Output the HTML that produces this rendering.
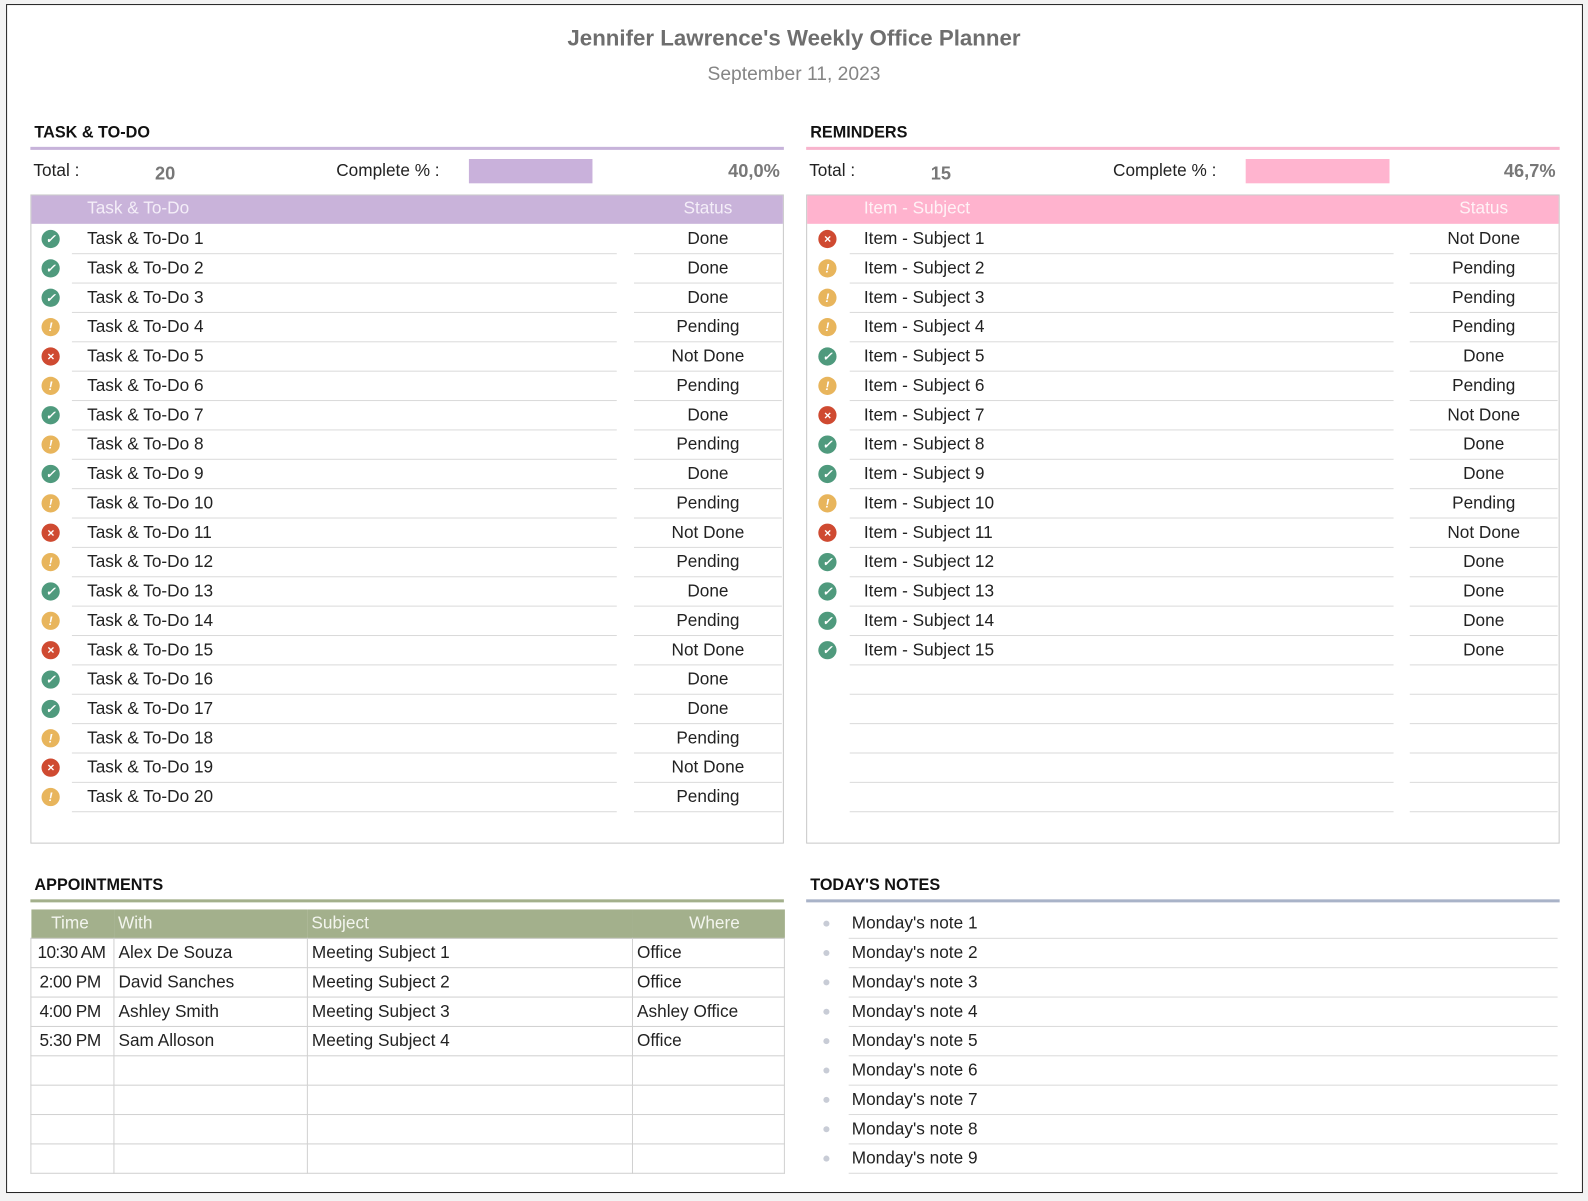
<!DOCTYPE html>
<html><head><meta charset="utf-8">
<style>
html,body{margin:0;padding:0;background:#f3f3f3;width:1588px;height:1201px;overflow:hidden}
#s{position:absolute;left:0;top:0;width:1568px;height:1186px;transform:scale(1.01276);transform-origin:0 0;font-family:"Liberation Sans",sans-serif;color:#222}
#frame{position:absolute;left:6px;top:4px;width:1555px;height:1172px;border:1.5px solid #222;background:#fff}
.a{position:absolute;white-space:nowrap}
.title{left:0;width:1568px;text-align:center;top:25px;font-size:22px;font-weight:bold;color:#6e6e6e}
.date{left:0;width:1568px;text-align:center;top:63px;font-size:19px;color:#858585}
.h{font-size:16px;font-weight:bold;color:#111}
.ln{height:3px}
.lbl{font-size:17px;color:#222}
.big{font-size:18px;font-weight:bold;color:#777}
.box{position:absolute;border:1px solid #c8c8c8;background:#fff}
.hd{position:absolute;left:0;top:0;right:0;height:28px;color:#f4eef8;font-size:17px;line-height:26px}
.rows{position:absolute;left:0;top:29px;right:0}
.r{position:relative;height:29px;font-size:17px;line-height:27px}
.r .n{position:absolute;left:55px;top:0}
.r .s{position:absolute;left:595px;width:146px;top:0;text-align:center}
.r:before{content:"";position:absolute;left:40px;width:538px;bottom:0;border-bottom:1px solid #dadada}
.r:after{content:"";position:absolute;left:595px;width:146px;bottom:0;border-bottom:1px solid #dadada}
.rb .r:before{left:42px;width:537px}
.ic{position:absolute;left:10px;top:5px;width:18px;height:18px;border-radius:50%;color:#fff;font-size:12px;line-height:18px;text-align:center;font-weight:bold}
.rb .ic{left:11px}
.g{background:#4f9a7d}
.o{background:#e8b55c}
.x{background:#cf4a31}
table{border-collapse:collapse;table-layout:fixed;position:absolute;left:30px;top:898px;width:744px;font-size:17px}
td{border:1px solid #d0d0d0;height:28px;padding:0 0 0 4px;line-height:28px;white-space:nowrap;overflow:hidden}
th{background:#a3b08c;color:#f3f5ee;font-weight:normal;text-align:left;height:28px;padding:0 0 0 4px}
.nt{position:absolute;left:838px;width:700px;height:29px;border-bottom:1px solid #dadada;font-size:17px;line-height:29px}
.nt b{position:absolute;left:-25px;top:12px;width:6px;height:6px;border-radius:50%;background:#c8ccd6}
.nt span{position:absolute;left:3px}
</style></head><body><div id="s">
<div id="frame"></div>
<div class="a title">Jennifer Lawrence's Weekly Office Planner</div>
<div class="a date">September 11, 2023</div>

<div class="a h" style="left:34px;top:123px">TASK &amp; TO-DO</div>
<div class="a ln" style="left:30px;top:145px;width:744px;background:#c7b3da"></div>
<div class="a lbl" style="left:33px;top:159px">Total :</div>
<div class="a big" style="left:153px;top:161px">20</div>
<div class="a lbl" style="left:332px;top:159px">Complete % :</div>
<div class="a" style="left:463px;top:157px;width:122px;height:24px;background:#c9b1db"></div>
<div class="a big" style="left:690px;top:159px;width:80px;text-align:right">40,0%</div>

<div class="a h" style="left:800px;top:123px">REMINDERS</div>
<div class="a ln" style="left:796px;top:145px;width:744px;background:#f8b4cd"></div>
<div class="a lbl" style="left:799px;top:159px">Total :</div>
<div class="a big" style="left:919px;top:161px">15</div>
<div class="a lbl" style="left:1099px;top:159px">Complete % :</div>
<div class="a" style="left:1230px;top:157px;width:142px;height:24px;background:#ffb4cf"></div>
<div class="a big" style="left:1456px;top:159px;width:80px;text-align:right">46,7%</div>

<div class="box" style="left:30px;top:192px;width:742px;height:639px">
<div class="hd" style="background:#c9b3da"><span style="position:absolute;left:55px">Task &amp; To-Do</span><span style="position:absolute;left:595px;width:146px;text-align:center">Status</span></div>
<div class="rows">
<div class="r"><i class="ic g">✓</i><span class="n">Task &amp; To-Do 1</span><span class="s">Done</span></div>
<div class="r"><i class="ic g">✓</i><span class="n">Task &amp; To-Do 2</span><span class="s">Done</span></div>
<div class="r"><i class="ic g">✓</i><span class="n">Task &amp; To-Do 3</span><span class="s">Done</span></div>
<div class="r"><i class="ic o">!</i><span class="n">Task &amp; To-Do 4</span><span class="s">Pending</span></div>
<div class="r"><i class="ic x">×</i><span class="n">Task &amp; To-Do 5</span><span class="s">Not Done</span></div>
<div class="r"><i class="ic o">!</i><span class="n">Task &amp; To-Do 6</span><span class="s">Pending</span></div>
<div class="r"><i class="ic g">✓</i><span class="n">Task &amp; To-Do 7</span><span class="s">Done</span></div>
<div class="r"><i class="ic o">!</i><span class="n">Task &amp; To-Do 8</span><span class="s">Pending</span></div>
<div class="r"><i class="ic g">✓</i><span class="n">Task &amp; To-Do 9</span><span class="s">Done</span></div>
<div class="r"><i class="ic o">!</i><span class="n">Task &amp; To-Do 10</span><span class="s">Pending</span></div>
<div class="r"><i class="ic x">×</i><span class="n">Task &amp; To-Do 11</span><span class="s">Not Done</span></div>
<div class="r"><i class="ic o">!</i><span class="n">Task &amp; To-Do 12</span><span class="s">Pending</span></div>
<div class="r"><i class="ic g">✓</i><span class="n">Task &amp; To-Do 13</span><span class="s">Done</span></div>
<div class="r"><i class="ic o">!</i><span class="n">Task &amp; To-Do 14</span><span class="s">Pending</span></div>
<div class="r"><i class="ic x">×</i><span class="n">Task &amp; To-Do 15</span><span class="s">Not Done</span></div>
<div class="r"><i class="ic g">✓</i><span class="n">Task &amp; To-Do 16</span><span class="s">Done</span></div>
<div class="r"><i class="ic g">✓</i><span class="n">Task &amp; To-Do 17</span><span class="s">Done</span></div>
<div class="r"><i class="ic o">!</i><span class="n">Task &amp; To-Do 18</span><span class="s">Pending</span></div>
<div class="r"><i class="ic x">×</i><span class="n">Task &amp; To-Do 19</span><span class="s">Not Done</span></div>
<div class="r"><i class="ic o">!</i><span class="n">Task &amp; To-Do 20</span><span class="s">Pending</span></div>
</div></div>

<div class="box rb" style="left:796px;top:192px;width:742px;height:639px">
<div class="hd" style="background:#ffb3ce;color:#fff2f6"><span style="position:absolute;left:56px">Item - Subject</span><span style="position:absolute;left:595px;width:146px;text-align:center">Status</span></div>
<div class="rows">
<div class="r"><i class="ic x">×</i><span class="n" style="left:56px">Item - Subject 1</span><span class="s">Not Done</span></div>
<div class="r"><i class="ic o">!</i><span class="n" style="left:56px">Item - Subject 2</span><span class="s">Pending</span></div>
<div class="r"><i class="ic o">!</i><span class="n" style="left:56px">Item - Subject 3</span><span class="s">Pending</span></div>
<div class="r"><i class="ic o">!</i><span class="n" style="left:56px">Item - Subject 4</span><span class="s">Pending</span></div>
<div class="r"><i class="ic g">✓</i><span class="n" style="left:56px">Item - Subject 5</span><span class="s">Done</span></div>
<div class="r"><i class="ic o">!</i><span class="n" style="left:56px">Item - Subject 6</span><span class="s">Pending</span></div>
<div class="r"><i class="ic x">×</i><span class="n" style="left:56px">Item - Subject 7</span><span class="s">Not Done</span></div>
<div class="r"><i class="ic g">✓</i><span class="n" style="left:56px">Item - Subject 8</span><span class="s">Done</span></div>
<div class="r"><i class="ic g">✓</i><span class="n" style="left:56px">Item - Subject 9</span><span class="s">Done</span></div>
<div class="r"><i class="ic o">!</i><span class="n" style="left:56px">Item - Subject 10</span><span class="s">Pending</span></div>
<div class="r"><i class="ic x">×</i><span class="n" style="left:56px">Item - Subject 11</span><span class="s">Not Done</span></div>
<div class="r"><i class="ic g">✓</i><span class="n" style="left:56px">Item - Subject 12</span><span class="s">Done</span></div>
<div class="r"><i class="ic g">✓</i><span class="n" style="left:56px">Item - Subject 13</span><span class="s">Done</span></div>
<div class="r"><i class="ic g">✓</i><span class="n" style="left:56px">Item - Subject 14</span><span class="s">Done</span></div>
<div class="r"><i class="ic g">✓</i><span class="n" style="left:56px">Item - Subject 15</span><span class="s">Done</span></div>
<div class="r"></div><div class="r"></div><div class="r"></div><div class="r"></div><div class="r"></div>
</div></div>

<div class="a h" style="left:34px;top:866px">APPOINTMENTS</div>
<div class="a ln" style="left:30px;top:888px;width:744px;background:#a3b08c"></div>
<table>
<colgroup><col style="width:82px"><col style="width:191px"><col style="width:321px"><col style="width:150px"></colgroup>
<tr><th style="padding-left:20px">Time</th><th>With</th><th>Subject</th><th style="text-align:right;padding-right:44px">Where</th></tr>
<tr><td style="padding-left:6px;letter-spacing:-0.6px">10:30 AM</td><td>Alex De Souza</td><td>Meeting Subject 1</td><td>Office</td></tr>
<tr><td style="padding-left:8px;letter-spacing:-0.4px">2:00 PM</td><td>David Sanches</td><td>Meeting Subject 2</td><td>Office</td></tr>
<tr><td style="padding-left:8px;letter-spacing:-0.4px">4:00 PM</td><td>Ashley Smith</td><td>Meeting Subject 3</td><td>Ashley Office</td></tr>
<tr><td style="padding-left:8px;letter-spacing:-0.4px">5:30 PM</td><td>Sam Alloson</td><td>Meeting Subject 4</td><td>Office</td></tr>
<tr><td></td><td></td><td></td><td></td></tr>
<tr><td></td><td></td><td></td><td></td></tr>
<tr><td></td><td></td><td></td><td></td></tr>
<tr><td></td><td></td><td></td><td></td></tr>
</table>

<div class="a h" style="left:800px;top:866px">TODAY'S NOTES</div>
<div class="a ln" style="left:796px;top:888px;width:744px;background:#a9b3c8"></div>
<div class="nt" style="top:897px"><b></b><span>Monday's note 1</span></div>
<div class="nt" style="top:926px"><b></b><span>Monday's note 2</span></div>
<div class="nt" style="top:955px"><b></b><span>Monday's note 3</span></div>
<div class="nt" style="top:984px"><b></b><span>Monday's note 4</span></div>
<div class="nt" style="top:1013px"><b></b><span>Monday's note 5</span></div>
<div class="nt" style="top:1042px"><b></b><span>Monday's note 6</span></div>
<div class="nt" style="top:1071px"><b></b><span>Monday's note 7</span></div>
<div class="nt" style="top:1100px"><b></b><span>Monday's note 8</span></div>
<div class="nt" style="top:1129px"><b></b><span>Monday's note 9</span></div>
</div></body></html>
